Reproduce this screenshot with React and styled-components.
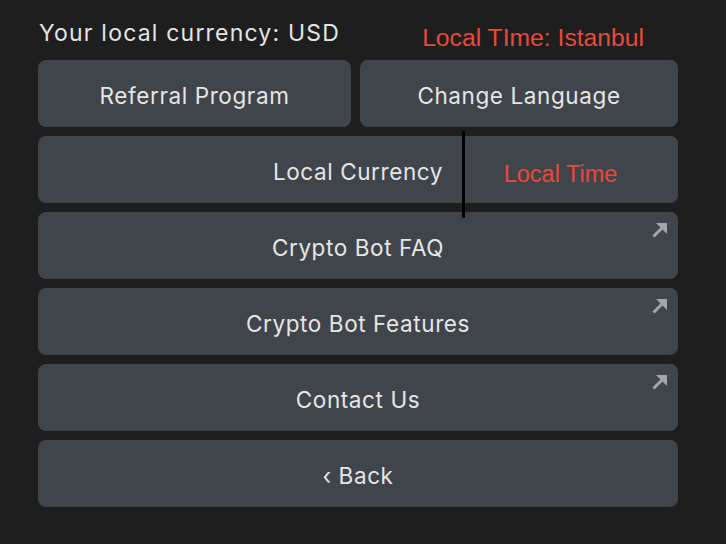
import React from "react";
import styled, { createGlobalStyle } from "styled-components";

const GlobalStyle = createGlobalStyle`
  html, body {
    margin: 0;
    padding: 0;
    background: #1e1e1e;
  }
  body {
    font-family: Inter, "Noto Sans", sans-serif;
  }
`;

const Page = styled.div`
  width: 726px;
  height: 544px;
  box-sizing: border-box;
  padding: 18px 48px 0 38px;
  background: #1e1e1e;
`;

const Header = styled.div`
  display: flex;
  align-items: center;
  justify-content: space-between;
  height: 32px;
  margin-bottom: 10px;
`;

const CurrencyLabel = styled.div`
  color: #e4e4e4;
  font-size: 23px;
  letter-spacing: 1.2px;
  padding-left: 1px;
  margin-top: -2px;
`;

const TimeLabel = styled.div`
  color: #e8493c;
  font-family: "Liberation Sans", Arial, sans-serif;
  font-size: 24.7px;
  margin-right: 34px;
  margin-top: 8px;
`;

const Grid = styled.div`
  display: grid;
  grid-template-columns: 313px 318px;
  column-gap: 9px;
  row-gap: 9px;
  grid-auto-rows: 67px;
`;

const Button = styled.div`
  position: relative;
  grid-column: ${({ wide }) => (wide ? "1 / span 2" : "auto")};
  z-index: ${({ raised }) => (raised ? 2 : "auto")};
  background: #40444b;
  border-radius: 8px;
  display: flex;
  align-items: center;
  justify-content: center;
  color: #e6e6e6;
  font-size: 22.5px;
  letter-spacing: 0.6px;
  padding-top: 4px;
  box-sizing: border-box;
`;

const Arrow = styled.svg`
  position: absolute;
  top: 10px;
  right: 10px;
  width: 16px;
  height: 16px;
`;

const TimeOverlay = styled.div`
  position: absolute;
  top: 0;
  bottom: 0;
  right: 0;
  width: 213px;
  background: #40444b;
  border-radius: 0 8px 8px 0;
  display: flex;
  align-items: center;
  justify-content: center;
  padding: 10px 22px 0 0;
  box-sizing: border-box;
  color: #e8493c;
  font-family: "Liberation Sans", Arial, sans-serif;
  font-size: 23.5px;
  letter-spacing: 0;
`;

const Divider = styled.div`
  position: absolute;
  left: 424px;
  top: -5px;
  width: 3px;
  height: 87px;
  background: #000;
`;

const LinkArrow = () => (
  <Arrow viewBox="0 0 16 16">
    <path d="M1.5 14.5 L12 4" stroke="#a3a6aa" strokeWidth="3" strokeLinecap="butt" />
    <path d="M4 1 H15 V12 Z" fill="#a3a6aa" />
  </Arrow>
);

export default function App() {
  return (
    <Page>
      <GlobalStyle />
      <Header>
        <CurrencyLabel>Your local currency: USD</CurrencyLabel>
        <TimeLabel>Local TIme: Istanbul</TimeLabel>
      </Header>
      <Grid>
        <Button>Referral Program</Button>
        <Button>Change Language</Button>
        <Button wide raised>
          Local Currency
          <TimeOverlay>Local Time</TimeOverlay>
          <Divider />
        </Button>
        <Button wide>
          Crypto Bot FAQ
          <LinkArrow />
        </Button>
        <Button wide>
          Crypto Bot Features
          <LinkArrow />
        </Button>
        <Button wide>
          Contact Us
          <LinkArrow />
        </Button>
        <Button wide>‹ Back</Button>
      </Grid>
    </Page>
  );
}
